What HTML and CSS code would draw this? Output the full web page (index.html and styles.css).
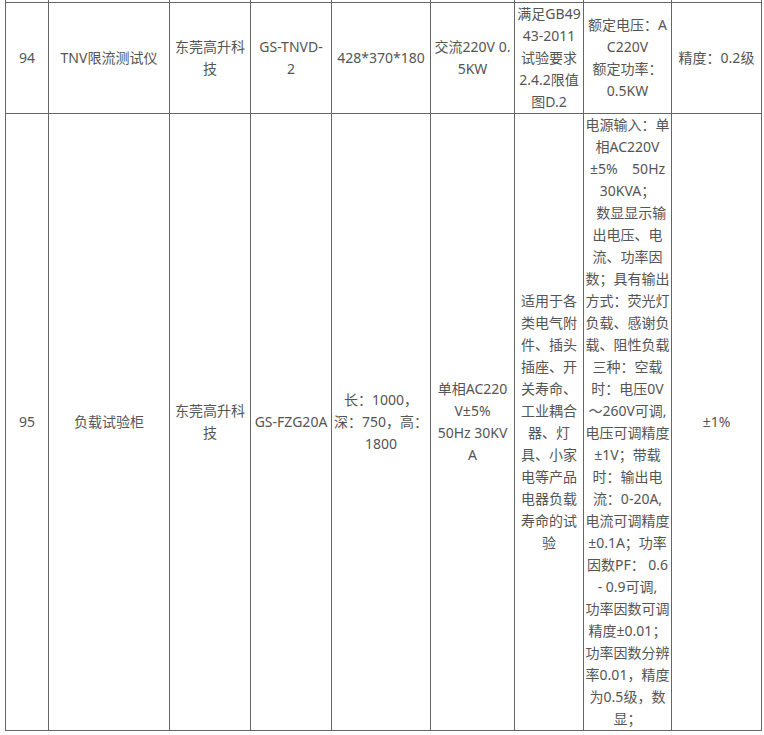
FILE: index.html
```html
<!DOCTYPE html>
<html lang="zh-CN">
<head>
<meta charset="utf-8">
<title>设备清单</title>
<link rel="stylesheet" href="styles.css">
</head>
<body>
<div class="wrap">
<table class="equip">
<colgroup>
<col class="c1"><col class="c2"><col class="c3"><col class="c4"><col class="c5"><col class="c6"><col class="c7"><col class="c8"><col class="c9">
</colgroup>
<tbody>
<tr class="stub"><td></td><td></td><td></td><td></td><td></td><td></td><td></td><td></td><td></td></tr>
<tr>
<td>94</td>
<td>TNV限流测试仪</td>
<td>东莞高升科技</td>
<td>GS-TNVD-<br>2</td>
<td>428*370*180</td>
<td>交流220V 0.<br>5KW</td>
<td>满足GB49<br>43-2011<br>试验要求<br>2.4.2限值<br>图D.2</td>
<td>额定电压：A<br>C220V<br>额定功率：<br>0.5KW</td>
<td>精度：0.2级</td>
</tr>
<tr>
<td>95</td>
<td>负载试验柜</td>
<td>东莞高升科技</td>
<td>GS-FZG20A</td>
<td>长：1000，<br>深：750，高：<br>1800</td>
<td>单相AC220<br>V±5%<br>50Hz 30KV<br>A</td>
<td>适用于各类电气附件、插头插座、开关寿命、工业耦合器、灯具、小家电等产品电器负载寿命的试验</td>
<td>电源输入：单<br>相AC220V<br>±5%&nbsp;&nbsp;&nbsp;&nbsp;50Hz<br>30KVA；<br>&nbsp;&nbsp;数显显示输<br>出电压、电<br>流、功率因<br>数；具有输出<br>方式：荧光灯<br>负载、感谢负<br>载、阻性负载<br>三种：空载<br>时：电压0V<br>～260V可调,<br>电压可调精度<br>±1V；带载<br>时：输出电<br>流：0-20A,<br>电流可调精度<br>±0.1A；功率<br>因数PF： 0.6<br>- 0.9可调,<br>功率因数可调<br>精度±0.01；<br>功率因数分辨<br>率0.01，精度<br>为0.5级，数<br>显；</td>
<td>±1%</td>
</tr>
</tbody>
</table>
</div>
</body>
</html>
```

FILE: styles.css
```css
html, body {
  margin: 0;
  padding: 0;
  background: #fff;
}
.wrap {
  padding-left: 5px;
}
.equip {
  border-collapse: collapse;
  table-layout: fixed;
  width: 756px;
  font-family: "Noto Sans", "Noto Sans CJK SC", sans-serif;
  font-size: 14px;
  line-height: 22px;
  color: #555;
}
.c1 { width: 43px; }
.c2 { width: 121px; }
.c3 { width: 81px; }
.c4 { width: 81px; }
.c5 { width: 99px; }
.c6 { width: 84px; }
.c7 { width: 69px; }
.c8 { width: 88px; }
.c9 { width: 90px; }
.equip td {
  border: 1px solid #666;
  padding: 0;
  text-align: center;
  vertical-align: middle;
  word-break: break-all;
}
.equip .stub td {
  border-top: none;
  height: 2px;
  line-height: 0;
  font-size: 0;
}
```
